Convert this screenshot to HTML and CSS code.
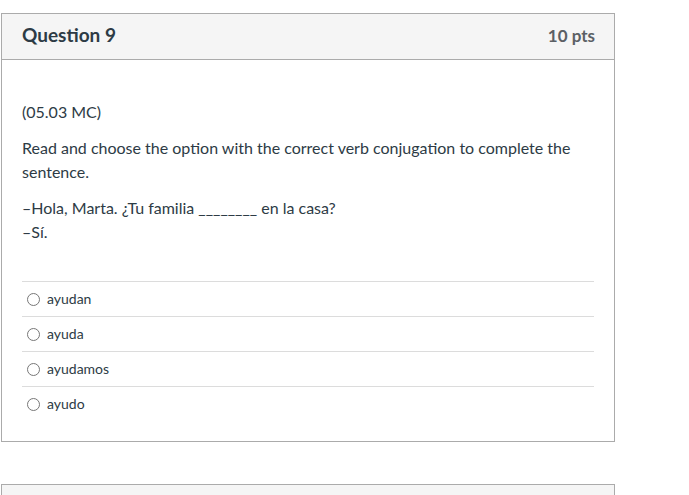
FILE: index.html
```html
<!DOCTYPE html>
<html>
<head>
<meta charset="utf-8">
<link rel="stylesheet" href="styles.css">
</head>
<body>
<div class="card">
  <div class="card-header">
    <span class="title">Question 9</span>
    <span class="pts">10 pts</span>
  </div>
  <div class="card-body">
    <p class="para">(05.03 MC)</p>
    <p class="para">Read and choose the option with the correct verb conjugation to complete the sentence.</p>
    <p class="para">–Hola, Marta. ¿Tu familia ________ en la casa?<br>–Sí.</p>
    <div class="answers">
      <label class="answer"><span class="radio"></span><span>ayudan</span></label>
      <label class="answer"><span class="radio"></span><span>ayuda</span></label>
      <label class="answer"><span class="radio"></span><span>ayudamos</span></label>
      <label class="answer"><span class="radio"></span><span>ayudo</span></label>
    </div>
  </div>
</div>
<div class="card next">
  <div class="card-header"></div>
</div>
</body>
</html>
```
FILE: styles.css
```css
html, body {
  margin: 0;
  padding: 0;
  background: #fff;
}
body {
  padding: 13px 0 0 1px;
  font-family: Lato, "Open Sans", sans-serif;
  color: #2d3b45;
}
.card {
  width: 612px;
  border: 1px solid #ababab;
  background: #fff;
}
.card.next {
  margin-top: 42px;
}
.card-header {
  height: 45px;
  background: #f5f5f5;
  border-bottom: 1px solid #ababab;
  display: flex;
  align-items: center;
  justify-content: space-between;
  padding: 0 19px 0 20px;
}
.title {
  font-size: 19px;
  font-weight: 700;
  color: #2d3b45;
  position: relative;
  top: -2px;
}
.pts {
  font-size: 17px;
  font-weight: 700;
  color: #5b6065;
  position: relative;
  top: -1px;
}
.card-body {
  padding: 40px 20px 20px 20px;
}
.para {
  margin: 0 0 12px 0;
  font-size: 16px;
  line-height: 24px;
}
.answers {
  margin-top: 37px;
}
.answer {
  display: flex;
  align-items: center;
  height: 32px;
  padding-bottom: 2px;
  border-top: 1px solid #dcdcdc;
  font-size: 14px;
  color: #2d3b45;
}
.radio {
  width: 11px;
  height: 11px;
  border: 1px solid #777;
  border-radius: 50%;
  margin: 2px 7px 0 5px;
  background: #fff;
}
```
